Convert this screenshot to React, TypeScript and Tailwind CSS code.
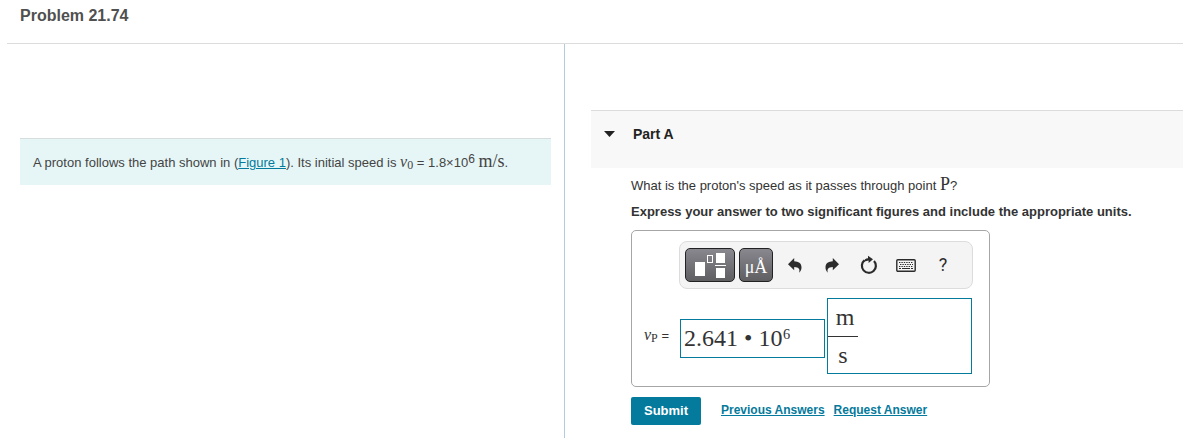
import type { ReactNode } from "react";

const SERIF = "font-['Liberation_Serif',serif]";

function ToolButton({ label, children }: { label: string; children: ReactNode }) {
  return (
    <button
      type="button"
      aria-label={label}
      className="flex h-6 w-6 items-center justify-center text-[#2b2b2b]"
    >
      {children}
    </button>
  );
}

function TemplatesIcon() {
  return (
    <svg width="32" height="26" viewBox="0 0 32 26" aria-hidden>
      <rect x="1" y="10" width="10" height="14" fill="#fff" />
      <rect x="13.5" y="3.5" width="5" height="7" fill="none" stroke="#fff" />
      <rect x="22" y="1" width="9" height="10" fill="#fff" />
      <rect x="21" y="13" width="11" height="1" fill="#fff" />
      <rect x="22" y="16" width="9" height="10" fill="#fff" />
    </svg>
  );
}

function ArrowIcon({ flip = false }: { flip?: boolean }) {
  return (
    <svg
      width="14"
      height="15"
      viewBox="0 0 14 15"
      fill="currentColor"
      className={flip ? "-scale-x-100" : ""}
      aria-hidden
    >
      <path d="M6.2 0v3.3c4.4.1 7.1 2.1 7.3 5.7.1 2.4-.8 4.4-2.4 5.7 1-3.2.1-5.5-4.9-5.6v3.2L0 6.2z" />
    </svg>
  );
}

function ResetIcon() {
  return (
    <svg width="18" height="20" viewBox="0 0 18 20" aria-hidden>
      <path
        d="M4.4 5.4A7 7 0 1 0 14 6"
        fill="none"
        stroke="currentColor"
        strokeWidth="2.2"
      />
      <path d="M8 0.8l5 3.5L8.6 8V5.6L3.6 6.8C4.2 4.8 5.6 3.4 8 3.2z" fill="currentColor" />
    </svg>
  );
}

function KeyboardIcon() {
  return (
    <svg width="20" height="13" viewBox="0 0 20 13" fill="none" stroke="currentColor" aria-hidden>
      <rect x=".8" y=".8" width="18.4" height="11.4" rx="1" strokeWidth="1.4" />
      <path d="M3 3.5h14M3 7.5h14" strokeDasharray="1.4 1" />
      <path d="M4 5.5h13" strokeDasharray="1.4 1" />
      <path d="M3 9.5h2M6 9.5h8M15 9.5h2" />
    </svg>
  );
}

function Toolbar() {
  const dark =
    "flex h-[34px] items-center justify-center rounded-[5px] border border-[#222] bg-linear-to-b from-[#88888f] to-[#5f5f62] text-white";

  return (
    <div
      role="toolbar"
      aria-label="Math tools"
      className="ml-[47px] mr-4 flex h-12 items-center rounded-lg border border-[#dcdcdc] bg-[#f4f4f4] px-[5px]"
    >
      <button type="button" aria-label="Templates" className={`${dark} w-[50px]`}>
        <TemplatesIcon />
      </button>
      <button
        type="button"
        aria-label="Units"
        className={`${dark} ml-1 w-[34px] pt-1 text-lg ${SERIF}`}
      >
        μÅ
      </button>
      <div className="ml-[10px] flex gap-[13px]">
        <ToolButton label="Undo">
          <ArrowIcon />
        </ToolButton>
        <ToolButton label="Redo">
          <ArrowIcon flip />
        </ToolButton>
        <ToolButton label="Reset">
          <ResetIcon />
        </ToolButton>
        <ToolButton label="Keyboard shortcuts">
          <KeyboardIcon />
        </ToolButton>
        <ToolButton label="Help">
          <span className="font-['Roboto',sans-serif] text-lg">?</span>
        </ToolButton>
      </div>
    </div>
  );
}

function AnswerBox() {
  return (
    <div className="w-fit rounded-[5px] border border-[#a6a6a6] pb-3 pt-[10px]">
      <Toolbar />
      <div className="mt-[9px] flex items-center pl-3 pr-[17px]">
        <label htmlFor="value" className="w-9 whitespace-nowrap">
          <span className={`text-base leading-4 ${SERIF}`}>
            <i>v</i>
            <sub className="bottom-[-2px] text-xs">P</sub>
          </span>{" "}
          =
        </label>
        <input
          id="value"
          defaultValue="2.641 • 10⁶"
          className={`mt-[5px] h-[39px] w-[145px] border border-[#047a9c] bg-white px-[3px] text-2xl text-[#333] outline-none ${SERIF}`}
        />
        <div
          role="group"
          aria-label="Units"
          className={`ml-[2px] h-19 w-[145px] border border-[#047a9c] text-2xl text-[#333] ${SERIF}`}
        >
          <input
            aria-label="Units numerator"
            defaultValue="m"
            className="block h-[38px] w-[30px] border-b border-[#333] pl-1 text-center outline-none"
          />
          <input
            aria-label="Units denominator"
            defaultValue="s"
            className="block h-9 w-[30px] text-center outline-none"
          />
        </div>
      </div>
    </div>
  );
}

export default function App() {
  return (
    <div className="flex min-h-screen flex-col bg-white font-['Liberation_Sans',Arial,sans-serif] text-[13px] text-[#333]">
      <header className="ml-[7px] h-11 border-b border-[#dcdcdc] px-[13px] pt-1">
        <h1 className="text-base font-bold text-[#505050]">Problem 21.74</h1>
      </header>

      <main className="grid flex-1 grid-cols-[565fr_618fr]">
        <section className="border-r border-[#b4cbdc] pl-5 pr-[13px] pt-[94px]">
          <p className="flex h-[47px] items-center border-t border-[#d5dddd] bg-[#e6f6f6] px-[13px] pt-[2px] text-[#444]">
            <span>
              A proton follows the path shown in (
              <a href="#figure" className="text-[#047a9c] underline">
                Figure 1
              </a>
              ). Its initial speed is{" "}
              <span className={`text-base leading-4 ${SERIF}`}>
                <i>v</i>
                <sub className="bottom-[-2px] text-xs">0</sub>
              </span>{" "}
              = 1.8×10
              <sup className="top-[-4px] text-xs">6</sup>{" "}
              <span className={`text-lg leading-4 ${SERIF}`}>m/s</span>.
            </span>
          </p>
        </section>

        <section className="pl-[26px] pt-[66px]">
          <div className="h-[58px] border-t border-[#dcdcdc] bg-[#f8f8f8] px-[13px] pt-[13px]">
            <button
              type="button"
              aria-expanded
              className="flex items-center gap-[18px] text-sm font-bold text-[#222]"
            >
              <svg width="11" height="6" viewBox="0 0 11 6" fill="currentColor" aria-hidden>
                <path d="M0 0h11L5.5 6z" />
              </svg>
              <span>Part A</span>
            </button>
          </div>

          <div className="pl-10 pt-2">
            <p className="leading-5">
              What is the proton's speed as it passes through point{" "}
              <span className={`text-lg leading-4 ${SERIF}`}>P</span>?
            </p>
            <p className="mb-2 mt-[6px] font-bold leading-5">
              Express your answer to two significant figures and include the appropriate units.
            </p>

            <AnswerBox />

            <div className="mt-[10px] flex items-center text-xs font-bold text-[#047a9c]">
              <button
                type="submit"
                className="h-7 w-[70px] rounded-xs bg-[#047a9c] text-[13px] text-white"
              >
                Submit
              </button>
              <div className="ml-5 flex gap-[9px] pb-[2px]">
                <a href="#previous" className="underline">
                  Previous Answers
                </a>
                <a href="#request" className="underline">
                  Request Answer
                </a>
              </div>
            </div>
          </div>
        </section>
      </main>
    </div>
  );
}
